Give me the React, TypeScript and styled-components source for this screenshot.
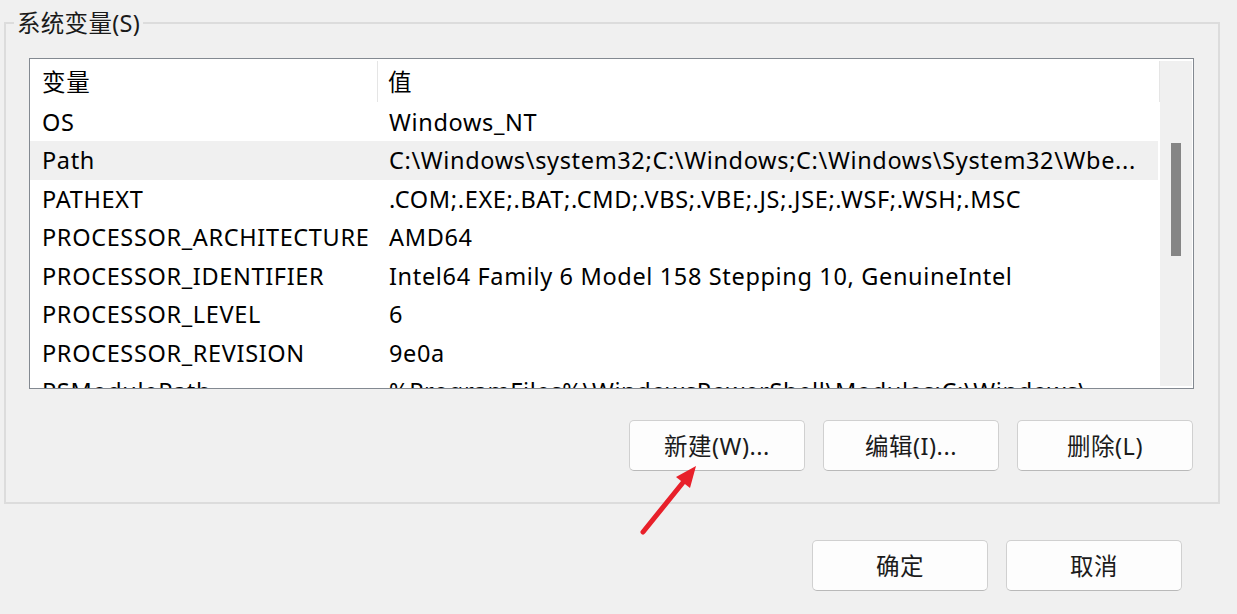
import React from 'react'
import styled, { createGlobalStyle } from 'styled-components'

// 系统变量 dialog section

const GlobalStyle = createGlobalStyle`
    html, body {
        margin: 0;
        padding: 0;
        background: #f0f0f0;
    }
    * {
        box-sizing: border-box;
    }
`

const FONT = `"Noto Sans", "Noto Sans CJK SC", sans-serif`

const Page = styled.div`
    position: relative;
    width: 1237px;
    height: 614px;
    overflow: hidden;
    background: #f0f0f0;
    font-family: ${FONT};
    font-size: 23.5px;
    letter-spacing: 0.65px;
    color: #000;
    padding-top: 9px;
`

const GroupBox = styled.fieldset`
    margin: 0 0 0 4px;
    width: 1216px;
    padding: 0;
    border: 2px solid #dcdcdc;
    border-radius: 0;
`

const GroupTitle = styled.legend`
    margin-left: 8px;
    padding: 0 3px;
    height: 28px;
    line-height: 28px;
    font-size: 23.5px;
    letter-spacing: 0.3px;
    color: #1a1a1a;
`

const GroupBody = styled.div`
    padding: 21px 24px 31px 23px;
`

const ListBox = styled.div`
    display: flex;
    width: 1165px;
    height: 331px;
    border: 1px solid #838991;
    background: #fff;
    overflow: hidden;
`

const ListContent = styled.div`
    flex: 1;
    overflow: hidden;
`

const HeaderRow = styled.div`
    display: grid;
    grid-template-columns: 348px 1fr;
    height: 43.5px;
    padding-top: 2px;
`

const HeaderCell = styled.div<{ $first?: boolean }>`
    display: flex;
    align-items: center;
    height: 41px;
    padding-left: ${p => (p.$first ? 12 : 10)}px;
    padding-bottom: 2px;
    border-right: 1px solid #e5e5e5;
`

const Row = styled.div<{ $selected?: boolean }>`
    display: grid;
    grid-template-columns: 348px 1fr;
    height: 38.5px;
    align-items: center;
    background: ${p => (p.$selected ? '#f0f0f0' : 'transparent')};
    margin-right: 2px;
`

const Cell = styled.div<{ $first?: boolean }>`
    padding-left: ${p => (p.$first ? 12 : 11)}px;
    white-space: nowrap;
    overflow: hidden;
`

const ScrollTrack = styled.div`
    width: 32px;
    margin: 2px 1px 2px 0;
    background: #f0f0f0;
    padding: 82px 0 0 11px;
`

const ScrollThumb = styled.div`
    width: 10px;
    height: 113px;
    background: #858585;
`

const ButtonRow = styled.div<{ $pad?: number }>`
    display: flex;
    justify-content: flex-end;
    gap: 18px;
    padding-right: ${p => p.$pad ?? 0}px;
`

const Button = styled.button`
    width: 176px;
    height: 51px;
    background: #fdfdfd;
    border: 1px solid #d0d0d0;
    border-bottom-color: #b9b9b9;
    border-radius: 5px;
    font-family: ${FONT};
    font-size: 23.5px;
    letter-spacing: 0.5px;
    color: #1b1b1b;
    padding: 0 0 2px;
`

const TopButtons = styled(ButtonRow)`
    margin-top: 31px;
    padding-right: 1px;
`

const BottomButtons = styled(ButtonRow)`
    margin-top: 36px;
`

const Arrow = styled.svg`
    position: absolute;
    left: 630px;
    top: 455px;
`

const rows: [string, string][] = [
    ['OS', 'Windows_NT'],
    ['Path', 'C:\\Windows\\system32;C:\\Windows;C:\\Windows\\System32\\Wbe...'],
    ['PATHEXT', '.COM;.EXE;.BAT;.CMD;.VBS;.VBE;.JS;.JSE;.WSF;.WSH;.MSC'],
    ['PROCESSOR_ARCHITECTURE', 'AMD64'],
    ['PROCESSOR_IDENTIFIER', 'Intel64 Family 6 Model 158 Stepping 10, GenuineIntel'],
    ['PROCESSOR_LEVEL', '6'],
    ['PROCESSOR_REVISION', '9e0a'],
    ['PSModulePath', '%ProgramFiles%\\WindowsPowerShell\\Modules;C:\\Windows\\...'],
]

export default function App() {
    return (
        <>
            <GlobalStyle />
            <Page>
                <GroupBox>
                    <GroupTitle>系统变量(S)</GroupTitle>
                    <GroupBody>
                        <ListBox>
                            <ListContent>
                                <HeaderRow>
                                    <HeaderCell $first>变量</HeaderCell>
                                    <HeaderCell>值</HeaderCell>
                                </HeaderRow>
                                {rows.map(([name, value]) => (
                                    <Row key={name} $selected={name === 'Path'}>
                                        <Cell $first>{name}</Cell>
                                        <Cell>{value}</Cell>
                                    </Row>
                                ))}
                            </ListContent>
                            <ScrollTrack>
                                <ScrollThumb />
                            </ScrollTrack>
                        </ListBox>
                        <TopButtons>
                            <Button>新建(W)...</Button>
                            <Button>编辑(I)...</Button>
                            <Button>删除(L)</Button>
                        </TopButtons>
                    </GroupBody>
                </GroupBox>
                <BottomButtons $pad={55}>
                    <Button>确定</Button>
                    <Button>取消</Button>
                </BottomButtons>
                <Arrow width="80" height="90" viewBox="0 0 80 90">
                    <line x1="13" y1="77" x2="55" y2="25" stroke="#e8202a" strokeWidth="5" strokeLinecap="round" />
                    <polygon points="66,11 46,22 60,33" fill="#e8202a" />
                </Arrow>
            </Page>
        </>
    )
}
